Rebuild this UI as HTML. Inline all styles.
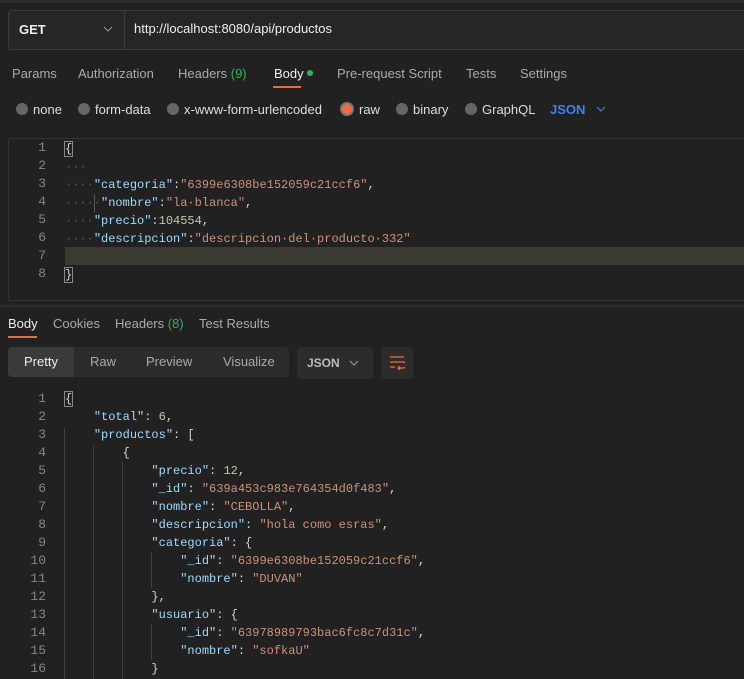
<!DOCTYPE html>
<html><head><meta charset="utf-8"><style>
body{margin:0;width:744px;height:679px;background:#212121;font-family:"Liberation Sans",sans-serif;color:#ccc;position:relative;overflow:hidden;font-size:13px}
.a{position:absolute;white-space:pre}
.m{font-family:"Liberation Mono",monospace;font-size:12px}
.k{color:#9cdcfe}.s{color:#ce9178}.n{color:#b5cea8}.p{color:#d4d4d4}.d{color:#555}
.ln{position:absolute;width:46px;text-align:right;left:0;color:#858585;font-family:"Liberation Mono",monospace;font-size:13px}
.g{color:#2fb35b}
</style></head><body>
<div class="a" style="left:0;top:0;width:744px;height:3px;background:#2a2a2a"></div>
<div class="a" style="left:8px;top:10px;width:740px;height:38px;border:1px solid #3a3a3a;border-radius:4px;background:#262626"></div>
<div class="a" style="left:9px;top:11px;width:115px;height:38px;border-right:1px solid #3a3a3a"></div>
<div class="a" style="left:19px;top:22px;font-weight:bold;color:#eee;font-size:13px">GET</div>
<svg class="a" style="left:103px;top:26px" width="10" height="6"><path d="M1 1L5 5L9 1" stroke="#999" fill="none"/></svg>
<div class="a" style="left:134px;top:21px;color:#eee;font-size:13px">http://localhost:8080/api/productos</div>

<div class="a" style="left:12px;top:66px;color:#aaa">Params</div>
<div class="a" style="left:78px;top:66px;color:#aaa">Authorization</div>
<div class="a" style="left:178px;top:66px;color:#aaa">Headers <span class="g">(9)</span></div>
<div class="a" style="left:274px;top:66px;color:#eee">Body</div>
<div class="a" style="left:307px;top:70px;width:6px;height:6px;border-radius:3px;background:#2fb35b"></div>
<div class="a" style="left:273px;top:86px;width:28px;height:2px;background:#f26b3a"></div>
<div class="a" style="left:337px;top:66px;color:#aaa">Pre-request Script</div>
<div class="a" style="left:466px;top:66px;color:#aaa">Tests</div>
<div class="a" style="left:520px;top:66px;color:#aaa">Settings</div>

<div class="a" style="left:16px;top:103px;width:12px;height:12px;border-radius:6px;background:#666"></div>
<div class="a" style="left:33px;top:102px;color:#ddd">none</div>
<div class="a" style="left:78px;top:103px;width:12px;height:12px;border-radius:6px;background:#666"></div>
<div class="a" style="left:95px;top:102px;color:#ddd">form-data</div>
<div class="a" style="left:167px;top:103px;width:12px;height:12px;border-radius:6px;background:#666"></div>
<div class="a" style="left:184px;top:102px;color:#ddd">x-www-form-urlencoded</div>
<div class="a" style="left:340px;top:102px;width:10px;height:10px;border-radius:7px;background:#f26b3a;border:2px solid #777"></div>
<div class="a" style="left:359px;top:102px;color:#ddd">raw</div>
<div class="a" style="left:396px;top:103px;width:12px;height:12px;border-radius:6px;background:#666"></div>
<div class="a" style="left:413px;top:102px;color:#ddd">binary</div>
<div class="a" style="left:465px;top:103px;width:12px;height:12px;border-radius:6px;background:#666"></div>
<div class="a" style="left:482px;top:102px;color:#ddd">GraphQL</div>
<div class="a" style="left:550px;top:102px;color:#3b82f6;font-weight:bold">JSON</div>
<svg class="a" style="left:596px;top:106px" width="10" height="6"><path d="M1 1L5 5L9 1" stroke="#3b82f6" fill="none"/></svg>

<div class="a" style="left:8px;top:138px;width:740px;height:161px;border:1px solid #333;border-right:none;border-radius:3px"></div>
<div class="a" style="left:65px;top:247px;width:679px;height:18px;background:#3a3a30"></div>
<div class="a" style="left:94px;top:194px;width:1px;height:18px;background:#555"></div>
<div class="ln" style="top:140px">1</div><div class="ln" style="top:158px">2</div><div class="ln" style="top:176px">3</div><div class="ln" style="top:194px">4</div><div class="ln" style="top:212px">5</div><div class="ln" style="top:230px">6</div><div class="ln" style="top:248px">7</div><div class="ln" style="top:266px">8</div>
<div class="a m" style="left:65px;top:140px;line-height:18px"><span class="p" style="outline:1px solid #888">{</span>
<span class="d">···</span>
<span class="d">····</span><span class="k">"categoria"</span><span class="p">:</span><span class="s">"6399e6308be152059c21ccf6"</span><span class="p">,</span>
<span class="d">·····</span><span class="k">"nombre"</span><span class="p">:</span><span class="s">"la·blanca"</span><span class="p">,</span>
<span class="d">····</span><span class="k">"precio"</span><span class="p">:</span><span class="n">104554</span><span class="p">,</span>
<span class="d">····</span><span class="k">"descripcion"</span><span class="p">:</span><span class="s">"descripcion·del·producto·332"</span>

<span class="p" style="outline:1px solid #888">}</span></div>

<div class="a" style="left:0;top:305px;width:744px;height:2px;background:#2c2c2c"></div>
<div class="a" style="left:8px;top:316px;color:#eee">Body</div>
<div class="a" style="left:8px;top:336px;width:29px;height:2px;background:#f26b3a"></div>
<div class="a" style="left:53px;top:316px;color:#aaa">Cookies</div>
<div class="a" style="left:115px;top:316px;color:#aaa">Headers <span class="g">(8)</span></div>
<div class="a" style="left:199px;top:316px;color:#aaa">Test Results</div>

<div class="a" style="left:8px;top:347px;width:281px;height:30px;border-radius:4px;background:#2c2c2c"></div>
<div class="a" style="left:8px;top:347px;width:66px;height:30px;border-radius:4px 0 0 4px;background:#3a3a3a"></div>
<div class="a" style="left:24px;top:354px;color:#eee">Pretty</div>
<div class="a" style="left:90px;top:354px;color:#aaa">Raw</div>
<div class="a" style="left:146px;top:354px;color:#aaa">Preview</div>
<div class="a" style="left:223px;top:354px;color:#aaa">Visualize</div>
<div class="a" style="left:297px;top:347px;width:76px;height:32px;border-radius:4px;background:#2c2c2c"></div>
<div class="a" style="left:307px;top:356px;color:#bbb;font-weight:bold;font-size:12px">JSON</div>
<svg class="a" style="left:349px;top:360px" width="10" height="6"><path d="M1 1L5 5L9 1" stroke="#999" fill="none"/></svg>
<div class="a" style="left:381px;top:347px;width:32px;height:32px;border-radius:4px;background:#2c2c2c"></div>
<svg class="a" style="left:389px;top:355px" width="16" height="16"><path d="M1 2H15M1 7H14a3 3 0 0 1 0 6H9M11 11L9 13L11 15M1 12H6" stroke="#f26b3a" fill="none" stroke-width="1.2"/></svg>

<div class="ln" style="top:390px;line-height:18px;white-space:pre">1
2
3
4
5
6
7
8
9
10
11
12
13
14
15
16</div>
<div class="a" style="left:64px;top:428px;width:1px;height:251px;background:#404040"></div>
<div class="a" style="left:93px;top:446px;width:1px;height:233px;background:#404040"></div>
<div class="a" style="left:122px;top:462px;width:1px;height:217px;background:#404040"></div>
<div class="a" style="left:151px;top:552px;width:1px;height:36px;background:#404040"></div>
<div class="a" style="left:151px;top:624px;width:1px;height:36px;background:#404040"></div>
<div class="a m" style="left:65px;top:390px;line-height:18px"><span class="p" style="outline:1px solid #888">{</span>
    <span class="k">"total"</span><span class="p">: </span><span class="n">6</span><span class="p">,</span>
    <span class="k">"productos"</span><span class="p">: [</span>
<span class="p">        {</span>
            <span class="k">"precio"</span><span class="p">: </span><span class="n">12</span><span class="p">,</span>
            <span class="k">"_id"</span><span class="p">: </span><span class="s">"639a453c983e764354d0f483"</span><span class="p">,</span>
            <span class="k">"nombre"</span><span class="p">: </span><span class="s">"CEBOLLA"</span><span class="p">,</span>
            <span class="k">"descripcion"</span><span class="p">: </span><span class="s">"hola como esras"</span><span class="p">,</span>
            <span class="k">"categoria"</span><span class="p">: {</span>
                <span class="k">"_id"</span><span class="p">: </span><span class="s">"6399e6308be152059c21ccf6"</span><span class="p">,</span>
                <span class="k">"nombre"</span><span class="p">: </span><span class="s">"DUVAN"</span>
<span class="p">            },</span>
            <span class="k">"usuario"</span><span class="p">: {</span>
                <span class="k">"_id"</span><span class="p">: </span><span class="s">"63978989793bac6fc8c7d31c"</span><span class="p">,</span>
                <span class="k">"nombre"</span><span class="p">: </span><span class="s">"sofkaU"</span>
<span class="p">            }</span></div>
</body></html>
